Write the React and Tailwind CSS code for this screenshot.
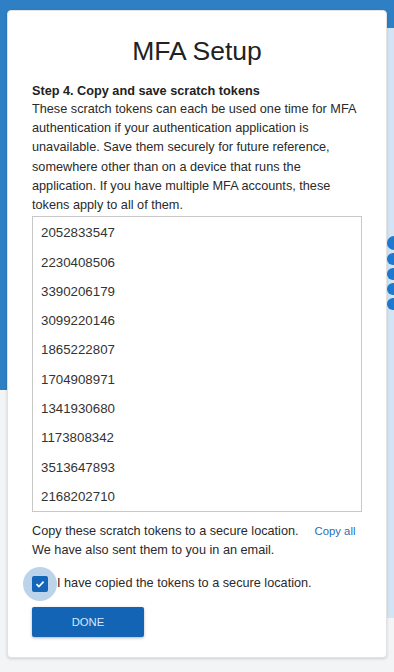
import React, { useState } from 'react';

const tokens = [
  '2052833547',
  '2230408506',
  '3390206179',
  '3099220146',
  '1865222807',
  '1704908971',
  '1341930680',
  '1173808342',
  '3513647893',
  '2168202710',
];

const App = () => {
  const [checked, setChecked] = useState(true);

  return (
    <div className="relative min-h-[672px] w-[394px] overflow-hidden bg-[linear-gradient(to_bottom,#2f7fc4_0,#2f7fc4_390px,#f3f4f5_390px)] pt-[10px] px-[7px] font-['Liberation_Sans',Arial,sans-serif] text-[#222]">
      {/* decorative swirl on the right edge */}
      <div className="absolute right-0 top-[28px] h-[590px] w-[7px] bg-[#d3e5f4]" />
      <div className="absolute right-0 top-[236px] flex w-[7px] flex-col gap-[3px]">
        <div className="h-[14px] rounded-l-full bg-[#1e7ad0]" />
        <div className="h-[12px] rounded-l-full bg-[#1e7ad0]" />
        <div className="h-[12px] rounded-l-full bg-[#1e7ad0]" />
        <div className="h-[12px] rounded-l-full bg-[#1e7ad0]" />
        <div className="h-[12px] rounded-l-full bg-[#1e7ad0]" />
      </div>

      <div className="relative rounded-[4px] border border-[#e2e2e2] bg-white px-[24px] pb-[20px] pt-[24px] shadow-[0_1px_3px_rgba(0,0,0,0.15)]">
        <h1 className="text-center text-[26.5px] leading-[32px] text-[#222]">MFA Setup</h1>

        <h2 className="mt-[16px] text-[12.7px] font-bold leading-[17px]">Step 4. Copy and save scratch tokens</h2>
        <p className="text-[12.7px] leading-[19.2px] text-[#2a2a2a]">
          These scratch tokens can each be used one time for MFA authentication if your authentication application is
          unavailable. Save them securely for future reference, somewhere other than on a device that runs the
          application. If you have multiple MFA accounts, these tokens apply to all of them.
        </p>

        <div className="mt-[1px] border border-[#c8c8c8] px-[8px] pb-0 pt-[1px]">
          {tokens.map((t) => (
            <div key={t} className="text-[13.3px] leading-[29.3px] text-[#333]">
              {t}
            </div>
          ))}
        </div>

        <div className="mt-[10px] flex items-center whitespace-nowrap text-[12.7px] leading-[19px] text-[#2a2a2a]">
          <span>Copy these scratch tokens to a secure location.</span>
          <a href="#" className="ml-[16px] text-[11.3px] text-[#2a6db5]">
            Copy all
          </a>
        </div>
        <p className="text-[12.7px] leading-[19px] text-[#2a2a2a]">We have also sent them to you in an email.</p>

        <label className="mt-[14px] flex items-center">
          <span className="relative flex h-[16px] w-[16px] items-center justify-center">
            <span className="absolute left-[-9px] top-[-9px] h-[34px] w-[34px] rounded-full bg-[#bcd4ea]" />
            <input
              type="checkbox"
              checked={checked}
              onChange={() => setChecked(!checked)}
              className="absolute inset-0 z-10 opacity-0"
            />
            <span className="relative flex h-[16px] w-[16px] items-center justify-center rounded-[2px] bg-[#1466b8]">
              {checked && (
                <svg width="12" height="12" viewBox="0 0 12 12" fill="none">
                  <path d="M2.5 6.2l2.4 2.4 4.7-5" stroke="white" strokeWidth="1.7" />
                </svg>
              )}
            </span>
          </span>
          <span className="ml-[9px] text-[12.7px] text-[#2a2a2a]">I have copied the tokens to a secure location.</span>
        </label>

        <button className="mt-[14px] h-[30px] w-[112px] rounded-[2px] bg-[#1364b4] text-[11.3px] text-[#d6e8fa] shadow-[0_1px_3px_rgba(0,0,0,0.3)]">
          DONE
        </button>
      </div>
    </div>
  );
};

export default App;
